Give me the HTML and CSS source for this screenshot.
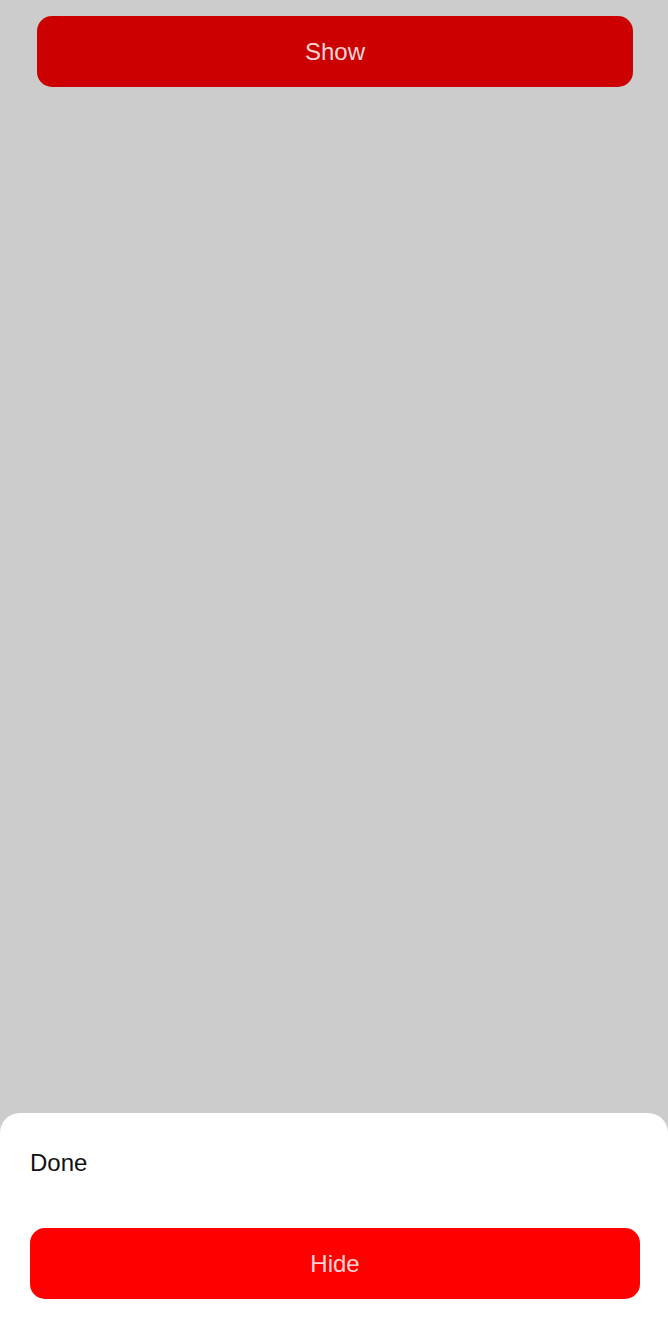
FILE: index.html
```html
<!DOCTYPE html>
<html lang="en">
<head>
<meta charset="utf-8">
<title>Sheet</title>
<link rel="stylesheet" href="styles.css">
</head>
<body>
<div class="screen">
  <button class="btn btn-show">Show</button>
  <div class="sheet">
    <div class="sheet-title">Done</div>
    <button class="btn btn-hide">Hide</button>
  </div>
</div>
</body>
</html>
```
FILE: styles.css
```css
html, body {
  margin: 0;
  padding: 0;
}
body {
  background: #cccccc;
  font-family: "Liberation Sans", Arial, sans-serif;
}
.screen {
  height: 1320px;
  display: flex;
  flex-direction: column;
  overflow: hidden;
}
.btn {
  border: none;
  font-family: inherit;
  font-size: 24px;
  color: rgba(255, 235, 235, 0.92);
  display: flex;
  align-items: center;
  justify-content: center;
  padding: 0;
}
.btn-show {
  margin: 16px 35px 0 37px;
  height: 71px;
  border-radius: 15px;
  background: #cc0000;
}
.sheet {
  margin-top: auto;
  height: 207px;
  box-sizing: border-box;
  background: #ffffff;
  border-radius: 20px 20px 0 0;
  padding: 36px 28px 0 30px;
}
.sheet-title {
  font-size: 24px;
  line-height: 28px;
  color: #111111;
}
.btn-hide {
  margin-top: 51px;
  width: 100%;
  height: 71px;
  border-radius: 15px;
  background: #ff0000;
}
```
